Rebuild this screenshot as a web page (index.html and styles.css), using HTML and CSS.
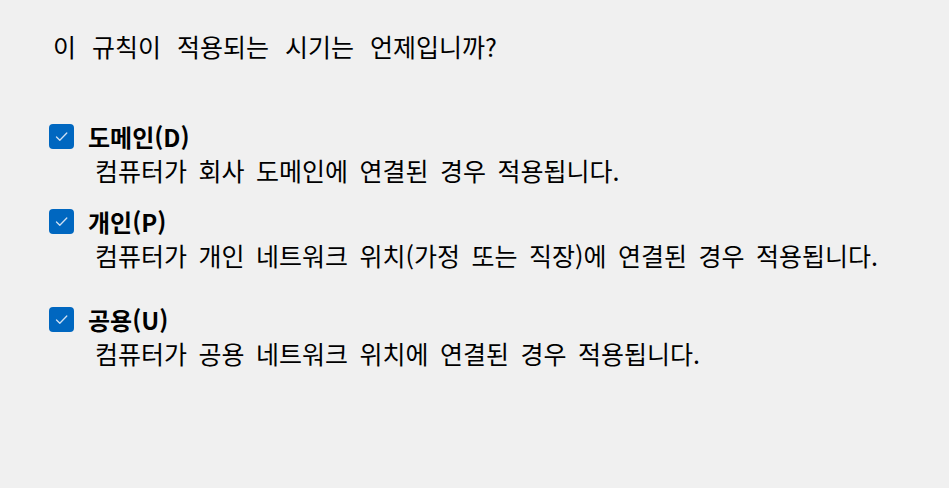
FILE: index.html
```html
<!DOCTYPE html>
<html lang="ko">
<head>
<meta charset="utf-8">
<link rel="stylesheet" href="styles.css">
</head>
<body>
<div class="page">
  <div class="title">이 규칙이 적용되는 시기는 언제입니까?</div>
  <div class="option opt1">
    <div class="head">
      <span class="box"><svg width="25" height="25" viewBox="0 0 25 25"><path d="M7.5 13 L10.8 16.3 L17.8 9" fill="none" stroke="#cfe0f3" stroke-width="1.3" stroke-linecap="round" stroke-linejoin="round"/></svg></span>
      <span class="label">도메인(D)</span>
    </div>
    <div class="desc">컴퓨터가 회사 도메인에 연결된 경우 적용됩니다.</div>
  </div>
  <div class="option opt2">
    <div class="head">
      <span class="box"><svg width="25" height="25" viewBox="0 0 25 25"><path d="M7.5 13 L10.8 16.3 L17.8 9" fill="none" stroke="#cfe0f3" stroke-width="1.3" stroke-linecap="round" stroke-linejoin="round"/></svg></span>
      <span class="label">개인(P)</span>
    </div>
    <div class="desc">컴퓨터가 개인 네트워크 위치(가정 또는 직장)에 연결된 경우 적용됩니다.</div>
  </div>
  <div class="option opt3">
    <div class="head">
      <span class="box"><svg width="25" height="25" viewBox="0 0 25 25"><path d="M7.5 13 L10.8 16.3 L17.8 9" fill="none" stroke="#cfe0f3" stroke-width="1.3" stroke-linecap="round" stroke-linejoin="round"/></svg></span>
      <span class="label">공용(U)</span>
    </div>
    <div class="desc">컴퓨터가 공용 네트워크 위치에 연결된 경우 적용됩니다.</div>
  </div>
</div>
</body>
</html>
```

FILE: styles.css
```css
html, body {
  margin: 0;
  padding: 0;
  background: #f0f0f0;
}
body {
  width: 949px;
  height: 488px;
  overflow: hidden;
  font-family: "Noto Sans CJK KR", "Noto Sans", sans-serif;
  color: #000;
}
.page {
  padding: 31px 0 0 49px;
}
.title {
  font-size: 25px;
  line-height: 30px;
  padding-left: 4px;
  word-spacing: 9px;
}
.option {
  display: flex;
  flex-direction: column;
}
.opt1 { margin-top: 58px; }
.opt2 { margin-top: 18px; }
.opt3 { margin-top: 31px; }
.head {
  display: flex;
  align-items: center;
  height: 34px;
}
.box {
  width: 25px;
  height: 25px;
  border-radius: 4px;
  background: #0067c0;
  display: flex;
}
.label {
  margin-left: 14px;
  font-size: 24px;
  font-weight: bold;
}
.desc {
  padding-left: 46px;
  font-size: 25px;
  line-height: 32px;
  margin-top: 1px;
  word-spacing: 4.5px;
}
```
